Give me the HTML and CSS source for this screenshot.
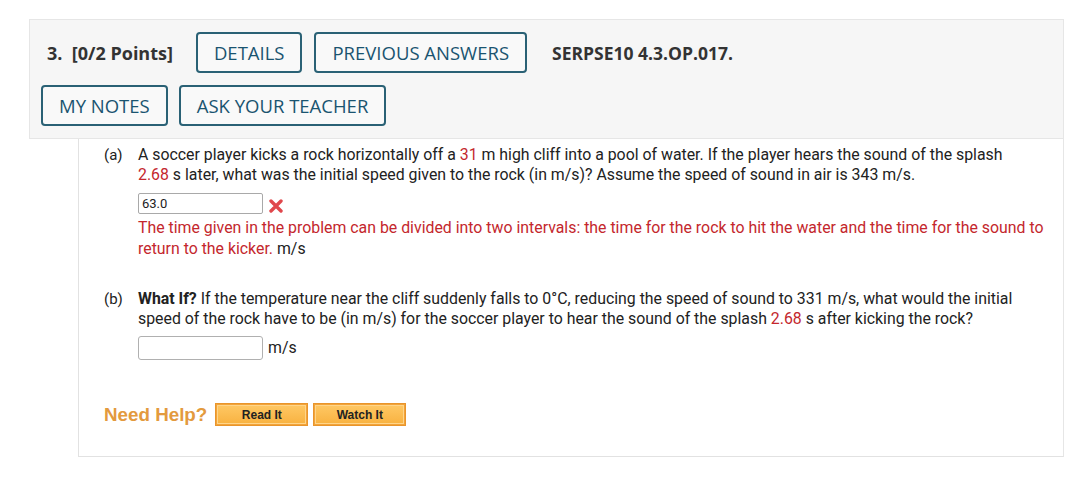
FILE: index.html
```html
<!DOCTYPE html>
<html>
<head>
<meta charset="utf-8">
<link rel="stylesheet" href="styles.css">
</head>
<body>
<div class="question">
  <div class="qhead">
    <div class="row row1">
      <span class="qnum">3.&nbsp; [0/2 Points]</span>
      <span class="btn">DETAILS</span>
      <span class="btn">PREVIOUS ANSWERS</span>
      <span class="qid">SERPSE10 4.3.OP.017.</span>
    </div>
    <div class="row row2">
      <span class="btn">MY NOTES</span>
      <span class="btn">ASK YOUR TEACHER</span>
    </div>
  </div>
  <div class="qbody">
    <div class="part part-a">
      <div class="plabel">(a)</div>
      <div class="pcontent">
        <p class="ptext">A soccer player kicks a rock horizontally off a <span class="red">31</span>&nbsp;m high cliff into a pool of water. If the player hears the sound of the splash <span class="red">2.68</span>&nbsp;s later, what was the initial speed given to the rock (in m/s)? Assume the speed of sound in air is 343&nbsp;m/s.</p>
        <div class="answer">
          <span class="input filled">63.0</span>
          <svg class="xmark" width="14" height="14" viewBox="0 0 14 14"><path d="M2 2 L12 12 M12 2 L2 12" stroke="#e0474c" stroke-width="3.4" stroke-linecap="round"/></svg>
        </div>
        <p class="feedback"><span class="red">The time given in the problem can be divided into two intervals: the time for the rock to hit the water and the time for the sound to return to the kicker.</span> m/s</p>
      </div>
    </div>
    <div class="part part-b">
      <div class="plabel">(b)</div>
      <div class="pcontent">
        <p class="ptext"><b>What If?</b> If the temperature near the cliff suddenly falls to 0°C, reducing the speed of sound to 331&nbsp;m/s, what would the initial speed of the rock have to be (in m/s) for the soccer player to hear the sound of the splash <span class="red">2.68</span>&nbsp;s after kicking the rock?</p>
        <div class="answer answer-b">
          <span class="input empty"></span>
          <span class="unit">m/s</span>
        </div>
      </div>
    </div>
    <div class="help">
      <span class="needhelp">Need Help?</span>
      <span class="hbtn">Read It</span>
      <span class="hbtn">Watch It</span>
    </div>
  </div>
</div>
</body>
</html>
```
FILE: styles.css
```css
html, body {
  margin: 0;
  padding: 0;
  background: #ffffff;
}
body {
  font-family: Roboto, "Liberation Sans", sans-serif;
  color: #222222;
}
.question {
  margin: 19px 0 0 29px;
  width: 1035px;
}
.qhead {
  background: #f6f6f6;
  border: 1px solid #e6e6e6;
  padding: 12px 11px 12px 11px;
  font-family: "Open Sans", sans-serif;
}
.row {
  display: flex;
  align-items: center;
}
.row1 {
  padding-left: 6px;
  gap: 12px;
}
.row2 {
  margin-top: 12px;
  gap: 11px;
}
.qnum {
  font-weight: 700;
  font-size: 18px;
  color: #333333;
  margin-right: 11px;
}
.qid {
  font-weight: 700;
  font-size: 17.5px;
  color: #333333;
  margin-left: 13px;
}
.btn {
  display: inline-flex;
  align-items: center;
  height: 37px;
  padding: 0 16px;
  border: 2px solid #2a6175;
  border-radius: 4px;
  font-size: 18.5px;
  font-weight: 500;
  color: #1a5470;
  background: #f9f9f9;
  box-sizing: content-box;
}
.qbody {
  margin-left: 49px;
  border-left: 1px solid #e2e2e2;
  border-right: 1px solid #e6e6e6;
  border-bottom: 1px solid #e2e2e2;
  padding: 6px 0 30px 0;
}
.part {
  display: flex;
  font-size: 15.87px;
  line-height: 20px;
}
.plabel {
  width: 34px;
  padding-left: 25px;
  flex: none;
  font-size: 15px;
}
.pcontent {
  flex: 1;
  padding-right: 14px;
}
.ptext {
  margin: 0;
}
.red {
  color: #c4272d;
}
.answer {
  display: flex;
  align-items: center;
  margin-top: 8px;
  height: 21px;
}
.input {
  display: inline-block;
  box-sizing: border-box;
  width: 125px;
  border: 1px solid #a9a9a9;
}
.input.filled {
  height: 21px;
  font-size: 13px;
  line-height: 19px;
  padding-left: 3px;
  border-radius: 2px;
}
.xmark {
  margin-left: 6px;
  margin-top: 5px;
}
.feedback {
  margin: 3px 0 0 0;
  line-height: 21px;
}
.part-b {
  margin-top: 30px;
}
.answer-b {
  margin-top: 7px;
  height: 24px;
}
.input.empty {
  height: 24px;
  border-radius: 3px;
  border-color: #b0b0b0;
}
.unit {
  margin-left: 5px;
}
.help {
  display: flex;
  align-items: center;
  margin: 43px 0 0 25px;
  gap: 5px;
}
.needhelp {
  font-family: "Liberation Sans", Arial, sans-serif;
  font-weight: 700;
  font-size: 18.8px;
  color: #e39a3e;
  margin-right: 3px;
}
.hbtn {
  display: inline-flex;
  align-items: center;
  justify-content: center;
  box-sizing: border-box;
  width: 93px;
  height: 23px;
  font-family: "Liberation Sans", Arial, sans-serif;
  font-weight: 700;
  font-size: 12px;
  color: #222222;
  background: linear-gradient(#ffc966, #f8b13f);
  border: 1px solid #e9952c;
  box-shadow: inset 0 0 0 1px #f2a43a, inset 0 0 0 2px #ffd58a;
}
```
